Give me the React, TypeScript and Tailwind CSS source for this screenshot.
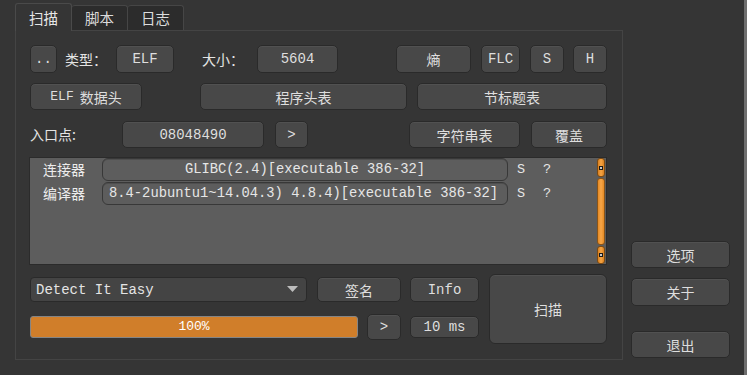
import React from "react";

const btn =
  "flex items-center justify-center rounded-[5px] border border-[#2a2a2a] bg-[#484848] text-[#dedede] text-[14px] leading-none shadow-[inset_0_1px_0_rgba(255,255,255,0.05)] shrink-0";
const mono = "[font-family:'Liberation_Mono','Noto_Sans_CJK_SC',monospace]";

function ScrollBtn({ h }: { h: string }) {
  return (
    <div
      className={`${h} w-[8px] rounded-[3px] border border-[#7a4a14] bg-[linear-gradient(to_right,#d9801f,#f6a443,#d9801f)] flex items-center justify-center`}
    >
      <div className="w-[4px] h-[4px] bg-[#1a1a1a] flex items-center justify-center">
        <div className="w-[2px] h-[2px] bg-[#c9c9c9]" />
      </div>
    </div>
  );
}

export default function App() {
  return (
    <div className="w-[747px] h-[375px] bg-[#353535] flex overflow-hidden [font-family:'Noto_Sans_CJK_SC','Noto_Sans',sans-serif] text-[#e4e4e4]">
      {/* left: tabs + pane */}
      <div className="ml-[15px] w-[608px] flex flex-col shrink-0">
        <div className="flex items-end h-[30px] pt-[3px] relative z-10">
          <div className="w-[57px] h-[28px] -mb-px bg-[#353535] border border-b-0 border-[#4a4a4a] rounded-t-[3px] flex items-center justify-center text-[14.5px] text-[#e6e6e6]">
            扫描
          </div>
          <div className="w-[56px] h-[25px] bg-[#2c2c2c] border border-b-0 border-l-0 border-[#464646] rounded-t-[3px] flex items-center justify-center text-[14.5px] text-[#dcdcdc]">
            脚本
          </div>
          <div className="w-[56px] h-[25px] bg-[#2c2c2c] border border-b-0 border-l-0 border-[#464646] rounded-t-[3px] flex items-center justify-center text-[14.5px] text-[#dcdcdc]">
            日志
          </div>
        </div>

        <div className="h-[330px] border border-[#444444] pl-[14px] pr-[15px] pt-[14px] flex flex-col">
          {/* row 1 */}
          <div className="flex items-center h-[28px]">
            <div className={`${btn} w-[27px] h-[28px] text-[#bdbdbd] text-[12px] ${mono}`}>..</div>
            <div className="w-[59px] pl-[8px] text-[14px] shrink-0">类型：</div>
            <div className={`${btn} w-[58px] h-[28px] ${mono} text-[13.5px]`}>ELF</div>
            <div className="w-[83px] pl-[28px] text-[14px] shrink-0">大小：</div>
            <div className={`${btn} w-[81px] h-[28px] ${mono} text-[13.5px]`}>5604</div>
            <div className={`${btn} ml-[58px] w-[75px] h-[28px]`}>熵</div>
            <div className={`${btn} ml-[10px] w-[39px] h-[28px] ${mono} text-[12.5px]`}>FLC</div>
            <div className={`${btn} ml-[10px] w-[34px] h-[28px] ${mono} text-[13px]`}>S</div>
            <div className={`${btn} ml-[9px] w-[34px] h-[28px] ${mono} text-[13px]`}>H</div>
          </div>

          {/* row 2 */}
          <div className="flex items-center h-[27px] mt-[10px]">
            <div className={`${btn} w-[112px] h-[27px] gap-[6px]`}>
              <span className={`${mono} text-[13px]`}>ELF</span>
              <span>数据头</span>
            </div>
            <div className={`${btn} ml-[58px] w-[207px] h-[27px]`}>程序头表</div>
            <div className={`${btn} ml-[10px] w-[190px] h-[27px]`}>节标题表</div>
          </div>

          {/* row 3 */}
          <div className="flex items-center h-[27px] mt-[11px]">
            <div className="w-[92px] text-[14px] shrink-0">入口点:</div>
            <div className={`${btn} w-[142px] h-[27px] ${mono} text-[13.5px]`}>08048490</div>
            <div className={`${btn} ml-[11px] w-[33px] h-[27px] ${mono} text-[13px]`}>&gt;</div>
            <div className={`${btn} ml-[101px] w-[111px] h-[27px]`}>字符串表</div>
            <div className={`${btn} ml-[11px] w-[76px] h-[27px]`}>覆盖</div>
          </div>

          {/* list */}
          <div className="-ml-px w-[578px] h-[108px] mt-[9px] border border-[#2b2b2b] bg-[#5d5d5d] flex">
            <div className="flex-1 flex flex-col gap-[1px]">
              <div className="flex items-center h-[23px]">
                <div className="w-[72px] pl-[13px] text-[14px] text-[#ececec] shrink-0">连接器</div>
                <div
                  className={`w-[406px] h-[23px] pt-[2px] rounded-[6px] border border-[#383838] shadow-[inset_0_1px_0_rgba(0,0,0,0.15)] flex items-center justify-center overflow-hidden whitespace-nowrap ${mono} text-[13.8px] text-[#e6e6e6] shrink-0`}
                >
                  GLIBC(2.4)[executable 386-32]
                </div>
                <div className={`ml-[9px] pt-[2px] ${mono} text-[13.5px] text-[#e6e6e6]`}>S</div>
                <div className={`ml-[18px] pt-[2px] ${mono} text-[13.5px] text-[#e6e6e6]`}>?</div>
              </div>
              <div className="flex items-center h-[23px]">
                <div className="w-[72px] pl-[13px] text-[14px] text-[#ececec] shrink-0">编译器</div>
                <div
                  className={`w-[406px] h-[23px] pt-[2px] rounded-[6px] border border-[#383838] shadow-[inset_0_1px_0_rgba(0,0,0,0.15)] flex items-center pl-[6px] overflow-hidden whitespace-nowrap ${mono} text-[13.8px] text-[#e6e6e6] shrink-0`}
                >
                  8.4-2ubuntu1~14.04.3) 4.8.4)[executable 386-32]
                </div>
                <div className={`ml-[9px] pt-[2px] ${mono} text-[13.5px] text-[#e6e6e6]`}>S</div>
                <div className={`ml-[18px] pt-[2px] ${mono} text-[13.5px] text-[#e6e6e6]`}>?</div>
              </div>
            </div>
            <div className="w-[8px] mr-[1px] flex flex-col">
              <ScrollBtn h="h-[19px]" />
              <div className="mt-[1px] h-[67px] w-[8px] rounded-[3px] border border-[#8a5418] bg-[linear-gradient(to_right,#e58a24,#f7a648,#e58a24)]" />
              <div className="mt-[1px] flex-1 flex flex-col">
                <ScrollBtn h="h-[18px]" />
              </div>
            </div>
          </div>

          {/* bottom area */}
          <div className="flex h-[70px] mt-[9px]">
            <div className="w-[449px] flex flex-col shrink-0">
              <div className="flex items-center h-[25px] mt-[3px]">
                <div className="w-[277px] h-[25px] rounded-[4px] border border-[#2a2a2a] bg-[#444444] flex items-center pl-[5px] pr-[8px] shrink-0">
                  <span className={`${mono} text-[14px] text-[#e4e4e4] flex-1 pt-[1px]`}>Detect It Easy</span>
                  <svg width="11" height="7" viewBox="0 0 11 7">
                    <polygon points="0,0 11,0 5.5,6" fill="#bdbdbd" />
                  </svg>
                </div>
                <div className={`${btn} ml-[10px] w-[84px] h-[25px]`}>签名</div>
                <div className={`${btn} ml-[9px] w-[69px] h-[25px] ${mono} text-[13px]`}>Info</div>
              </div>
              <div className="flex items-center h-[26px] mt-[12px]">
                <div
                  className={`w-[328px] h-[22px] rounded-[3px] border border-[#858585] bg-[#d07e2a] flex items-center justify-center ${mono} text-[13px] text-white shrink-0`}
                >
                  100%
                </div>
                <div className={`${btn} ml-[9px] w-[34px] h-[26px] ${mono} text-[13px]`}>&gt;</div>
                <div className={`${btn} ml-[9px] w-[69px] h-[22px] rounded-[4px] bg-[#4a4a4a] ${mono} text-[13.5px]`}>
                  10 ms
                </div>
              </div>
            </div>
            <div className={`${btn} ml-[10px] w-[118px] h-[70px] rounded-[6px]`}>扫描</div>
          </div>
        </div>
      </div>

      {/* right column */}
      <div className="ml-[8px] w-[99px] flex flex-col shrink-0">
        <div className={`${btn} mt-[241px] w-[99px] h-[27px]`}>选项</div>
        <div className={`${btn} mt-[10px] w-[99px] h-[28px]`}>关于</div>
        <div className={`${btn} mt-[25px] w-[99px] h-[27px]`}>退出</div>
      </div>

      <div className="ml-auto w-[3px] h-full bg-[#6e6e6e] shrink-0" />
    </div>
  );
}
